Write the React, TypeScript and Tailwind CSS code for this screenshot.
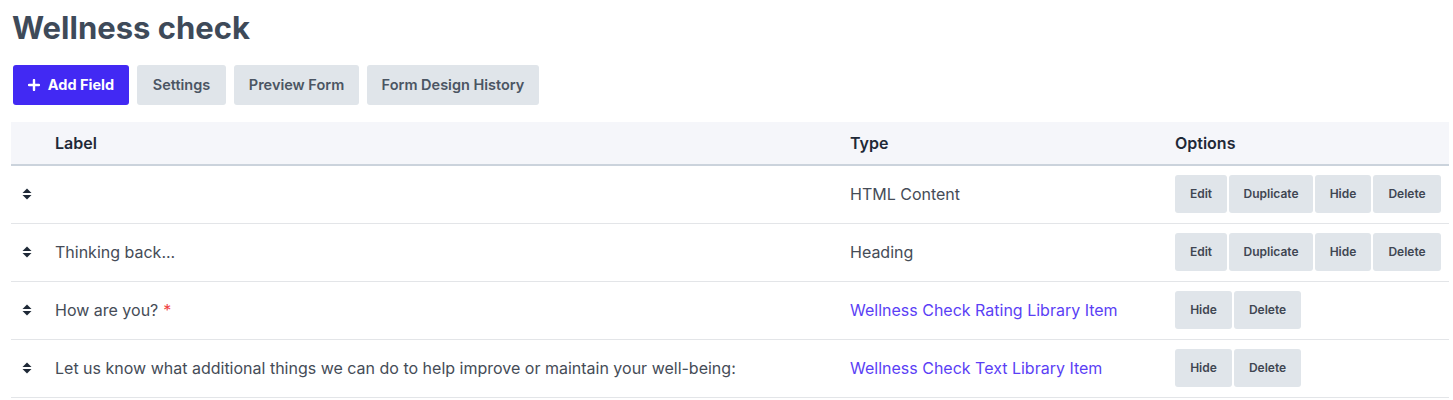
import React from "react";

function SortIcon() {
  return (
    <svg width="10" height="12" viewBox="0 0 10 12" className="block mx-auto">
      <path d="M5 0.5 L9.5 5 L0.5 5 Z" fill="#1f2937" />
      <path d="M0.5 7 L9.5 7 L5 11.5 Z" fill="#1f2937" />
    </svg>
  );
}

function OptBtn({ label, w }: { label: string; w: string }) {
  return (
    <button
      className={`h-[38px] ${w} shrink-0 rounded-[3px] bg-[#e0e5ea] text-[12px] font-semibold text-[#3f4652] flex items-center justify-center`}
    >
      {label}
    </button>
  );
}

type Row = {
  label: string;
  required?: boolean;
  type: string;
  link?: boolean;
  full: boolean;
};

const rows: Row[] = [
  { label: "", type: "HTML Content", full: true },
  { label: "Thinking back...", type: "Heading", full: true },
  { label: "How are you?", required: true, type: "Wellness Check Rating Library Item", link: true, full: false },
  {
    label: "Let us know what additional things we can do to help improve or maintain your well-being:",
    type: "Wellness Check Text Library Item",
    link: true,
    full: false,
  },
];

export default function App() {
  return (
    <div className="bg-white min-h-[400px] w-[1453px] font-['Inter',sans-serif] text-[#374151]">
      <div className="pl-[12px] pt-[8px]">
        <h1 className="text-[31px] leading-[40px] font-bold text-[#3e4a59]">Wellness check</h1>
        <div className="flex gap-2 mt-[17px] ml-[1px]">
          <button className="h-[40px] w-[116px] rounded-[3px] bg-[#4229f3] text-white text-[14.5px] font-bold flex items-center justify-center gap-[8px]">
            <svg width="12" height="12" viewBox="0 0 12 12">
              <path d="M6 1 V11 M1 6 H11" stroke="white" strokeWidth="2.4" strokeLinecap="round" />
            </svg>
            Add Field
          </button>
          <button className="h-[40px] w-[89px] rounded-[3px] bg-[#e0e5ea] text-[14.5px] font-semibold text-[#4b5563]">Settings</button>
          <button className="h-[40px] w-[125px] rounded-[3px] bg-[#e0e5ea] text-[14.5px] font-semibold text-[#4b5563]">Preview Form</button>
          <button className="h-[40px] w-[172px] rounded-[3px] bg-[#e0e5ea] text-[14.5px] font-semibold text-[#4b5563]">Form Design History</button>
        </div>
      </div>
      <table className="ml-[11px] mt-[17px] w-[1438px] border-collapse table-fixed">
        <colgroup>
          <col className="w-[32px]" />
          <col className="w-[795px]" />
          <col className="w-[325px]" />
          <col className="w-[286px]" />
        </colgroup>
        <thead>
          <tr className="bg-[#f5f6fa] border-b-2 border-[#cbd3dc] h-[43px]">
            <th></th>
            <th className="px-3 text-left text-[16px] font-semibold text-[#1f2937]">Label</th>
            <th className="px-3 text-left text-[16px] font-semibold text-[#1f2937]">Type</th>
            <th className="px-3 text-left text-[16px] font-semibold text-[#1f2937]">Options</th>
          </tr>
        </thead>
        <tbody>
          {rows.map((r, i) => (
            <tr key={i} className="h-[58px] border-b border-[#e3e5e8]">
              <td className="align-middle">
                <SortIcon />
              </td>
              <td className="px-3 text-[16px] text-[#454c57]">
                {r.label}
                {r.required && <span className="text-[#ef4444] ml-[5px]">*</span>}
              </td>
              <td className={`px-3 text-[16px] ${r.link ? "text-[#5b3ff5]" : "text-[#454c57]"}`}>{r.type}</td>
              <td className="pl-3 pr-[4px]">
                <div className="flex gap-[2px]">
                  {r.full ? (
                    <>
                      <OptBtn label="Edit" w="w-[52px]" />
                      <OptBtn label="Duplicate" w="w-[84px]" />
                      <OptBtn label="Hide" w="w-[56px]" />
                      <OptBtn label="Delete" w="w-[68px]" />
                    </>
                  ) : (
                    <>
                      <OptBtn label="Hide" w="w-[57px]" />
                      <OptBtn label="Delete" w="w-[67px]" />
                    </>
                  )}
                </div>
              </td>
            </tr>
          ))}
        </tbody>
      </table>
    </div>
  );
}
